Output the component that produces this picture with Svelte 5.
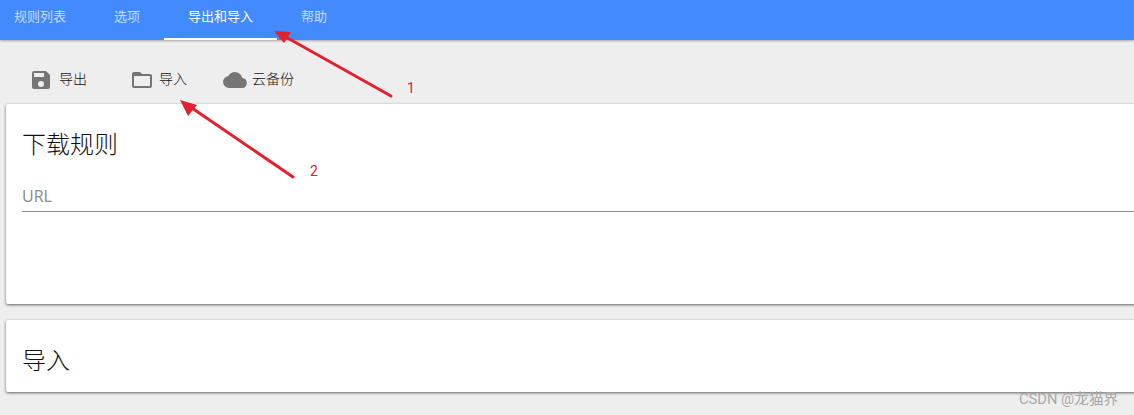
<script>
  const tabs = [
    { label: '规则列表' },
    { label: '选项' },
    { label: '导出和导入', active: true },
    { label: '帮助' }
  ]
</script>

<div class="page">
  <header class="appbar">
    <nav class="tabs">
      {#each tabs as tab}
        <button class="tab" class:active={tab.active}>{tab.label}</button>
      {/each}
    </nav>
  </header>

  <div class="toolbar">
    <button class="tool save">
      <svg width="24" height="24" viewBox="0 0 24 24"><path fill="#757575" d="M17 3H5a2 2 0 0 0-2 2v14a2 2 0 0 0 2 2h14a2 2 0 0 0 2-2V7l-4-4zm-5 16a3 3 0 1 1 0-6 3 3 0 0 1 0 6zm3-10H5V5h10v4z"/></svg>
      <span>导出</span>
    </button>
    <button class="tool open">
      <svg width="24" height="24" viewBox="0 0 24 24"><path fill="#757575" d="M20 6h-8l-2-2H4a2 2 0 0 0-2 2v12a2 2 0 0 0 2 2h16a2 2 0 0 0 2-2V8a2 2 0 0 0-2-2zm0 12H4V8h16v10z"/></svg>
      <span>导入</span>
    </button>
    <button class="tool cloud">
      <svg width="24" height="24" viewBox="0 0 24 24"><path fill="#757575" d="M19.35 10.04A7.49 7.49 0 0 0 12 4a7.5 7.5 0 0 0-6.65 4.04A6 6 0 0 0 6 20h13a5 5 0 0 0 .35-9.96z"/></svg>
      <span>云备份</span>
    </button>
  </div>

  <section class="card rules">
    <h2>下载规则</h2>
    <div class="field">URL</div>
  </section>

  <section class="card import">
    <h2>导入</h2>
  </section>

  <svg class="marks" width="1134" height="415" viewBox="0 0 1134 415">
    <g stroke="#e3212d" stroke-width="3" stroke-linecap="round">
      <line x1="391" y1="96" x2="284" y2="36" />
      <line x1="293" y1="177" x2="189" y2="106" />
    </g>
    <g fill="#e3212d">
      <polygon points="274,31 291,32 284,43" />
      <polygon points="180,100 197,105 188,116" />
    </g>
  </svg>
  <span class="note one">1</span>
  <span class="note two">2</span>
  <span class="watermark">CSDN @龙猫界</span>
</div>

<style>
  :global(body) {
    margin: 0;
    background: #eeeeee;
    overflow: hidden;
  }

  .page {
    position: relative;
    width: 1134px;
    height: 415px;
    overflow: hidden;
    background: #eeeeee;
    font-family: Roboto, "Noto Sans CJK SC", sans-serif;
  }

  .appbar {
    height: 40px;
    background: #448aff;
    box-shadow: 0 1px 2px rgba(0, 0, 0, 0.3);
  }

  .tabs {
    display: flex;
    height: 100%;
    margin-left: -10px;
  }

  .tab {
    padding: 0 24px 7px;
    border: none;
    border-bottom: 2px solid transparent;
    background: none;
    color: rgba(255, 255, 255, 0.7);
    font: inherit;
    font-size: 13px;
  }

  .tab.active {
    border-bottom-color: #fff;
    color: #fff;
  }

  .toolbar {
    display: flex;
    align-items: center;
    height: 48px;
    padding-top: 16px;
  }

  .tool {
    display: flex;
    align-items: center;
    padding: 0;
    border: none;
    background: none;
    color: #111;
    font: inherit;
    font-size: 14px;
    font-weight: 300;
  }

  .tool span {
    margin-bottom: 4px;
  }

  .save {
    margin-left: 29px;
    gap: 6px;
  }

  .open {
    margin-left: 43px;
    gap: 5px;
  }

  .cloud {
    margin-left: 36px;
    gap: 5px;
  }

  .card {
    margin-left: 6px;
    width: 1160px;
    box-sizing: border-box;
    padding: 0 16px;
    background: #fff;
    border-radius: 2px;
    box-shadow: 0 1px 3px rgba(0, 0, 0, 0.6);
  }

  .rules {
    height: 200px;
    padding-top: 26px;
  }

  .import {
    height: 72px;
    margin-top: 16px;
    padding-top: 26px;
  }

  h2 {
    margin: 0;
    color: #111;
    font-size: 24px;
    font-weight: 300;
    line-height: 30px;
  }

  .field {
    margin-top: 26px;
    padding-bottom: 5px;
    border-bottom: 1px solid #8c8c8c;
    color: #8a8a8a;
    font-family: "Open Sans", sans-serif;
    font-size: 16px;
    line-height: 20px;
  }

  .marks {
    position: absolute;
    inset: 0;
    pointer-events: none;
  }

  .note {
    position: absolute;
    color: #d3242e;
    font-size: 14px;
    line-height: 16px;
  }

  .one {
    left: 407px;
    top: 80px;
  }

  .two {
    left: 310px;
    top: 163px;
  }

  .watermark {
    position: absolute;
    left: 1019px;
    top: 391px;
    color: #a8a8a8;
    font-size: 14.7px;
    line-height: 16px;
  }
</style>
